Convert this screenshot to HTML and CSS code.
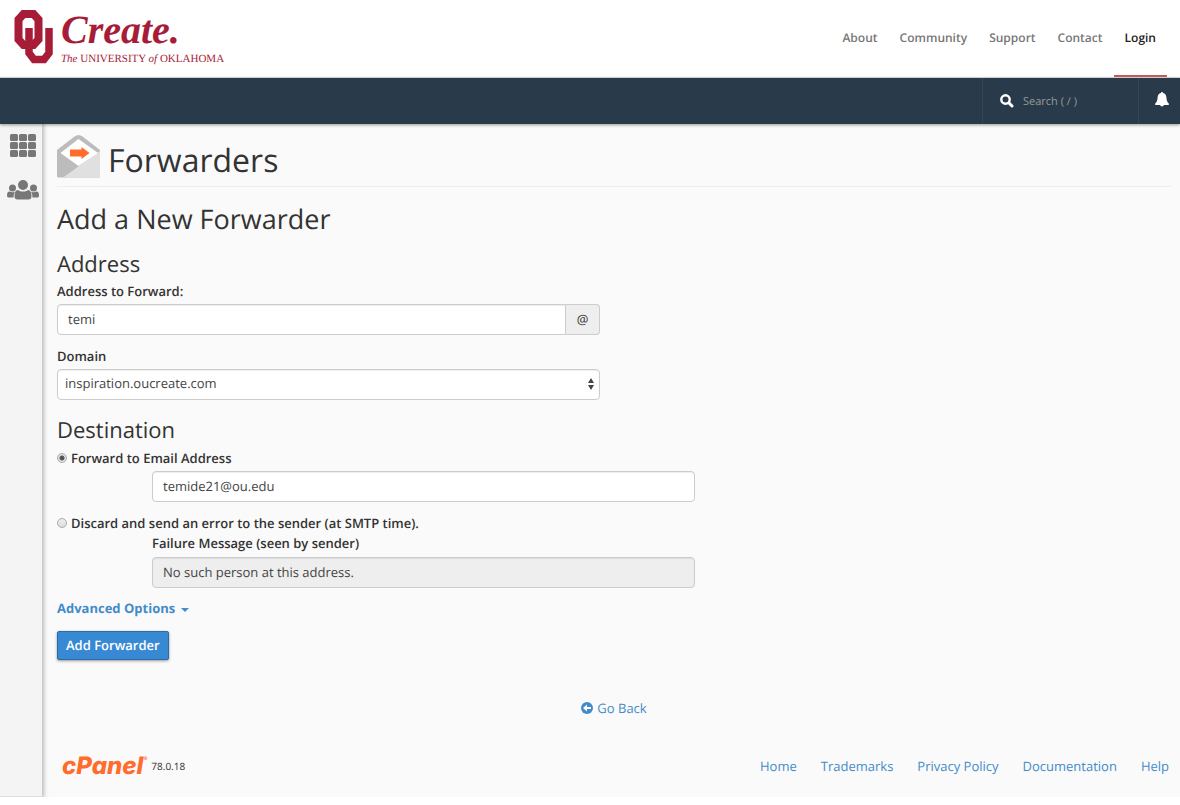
FILE: index.html
```html
<!DOCTYPE html>
<html lang="en">
<head>
  <meta charset="utf-8">
  <title>cPanel - Forwarders</title>
  <link rel="stylesheet" href="styles.css">
</head>

<body>
  <header class="site-header">
    <a href="#" class="logo">
      <svg class="logo-mark" width="40" height="54" viewBox="0 0 40 54" fill="none" stroke="#a71c37" stroke-width="8" aria-hidden="true">
        <path d="M9.500 4h10l5 5.500v20l-5 5.500h-10l-5-5.500v-20z" />
        <path d="M15 18v25l5 6.500h10l5-6.500v-25" stroke-width="7.500" />
      </svg>
      <span class="logo-text">
        <span class="logo-create">Create.</span>
        <span class="logo-sub"><i>The</i> UNIVERSITY <i>of</i> OKLAHOMA</span>
      </span>
    </a>
    <nav class="site-nav">
      <a href="#">About</a>
      <a href="#">Community</a>
      <a href="#">Support</a>
      <a href="#">Contact</a>
      <a href="#" class="active">Login</a>
    </nav>
  </header>

  <div class="top-bar">
    <div class="search">
      <svg width="14" height="14" viewBox="0 0 14 14" fill="none" stroke="#fff" aria-hidden="true">
        <circle cx="5.500" cy="5.500" r="4.200" stroke-width="2.400" />
        <path d="M9 9l3 3" stroke-width="3" stroke-linecap="round" />
      </svg>
      <input type="text" placeholder="Search ( / )" aria-label="Search">
    </div>
    <button type="button" class="bell-btn" aria-label="Notifications">
      <svg width="14" height="15" viewBox="0 0 14 15" fill="#fff" aria-hidden="true">
        <path d="M7 0c.7 0 1 .4 1 1 2.200.5 3.300 2.200 3.400 4.500.1 3 .9 4.600 2.400 6v1.400H.2v-1.400c1.500-1.400 2.300-3 2.400-6C2.700 3.200 3.800 1.500 6 1c0-.6.300-1 1-1zM5 12.500h4c-.2 1.300-1 2-2 2s-1.800-.7-2-2z" />
      </svg>
    </button>
  </div>

  <div class="page">
    <aside class="sidebar">
      <a href="#" aria-label="Home">
        <svg width="26" height="23" viewBox="0 0 26 23" fill="#777" aria-hidden="true">
          <rect x="0" y="0" width="8" height="7" rx="1.500" />
          <rect x="9" y="0" width="8" height="7" rx="1.500" />
          <rect x="18" y="0" width="8" height="7" rx="1.500" />
          <rect x="0" y="8" width="8" height="7" rx="1.500" />
          <rect x="9" y="8" width="8" height="7" rx="1.500" />
          <rect x="18" y="8" width="8" height="7" rx="1.500" />
          <rect x="0" y="16" width="8" height="7" rx="1.500" />
          <rect x="9" y="16" width="8" height="7" rx="1.500" />
          <rect x="18" y="16" width="8" height="7" rx="1.500" />
        </svg>
      </a>
      <a href="#" aria-label="User Manager">
        <svg width="32" height="20" viewBox="0 0 32 20" fill="#777" aria-hidden="true">
          <circle cx="16" cy="5" r="5" />
          <path d="M11 10c1.500 1.200 3 1.500 5 1.500s3.500-.3 5-1.500c2.500.3 3.500 2.500 3.500 6 0 2.500-1 3.500-3 3.500h-11c-2 0-3-1-3-3.500 0-3.500 1-5.700 3.500-6z" />
          <circle cx="5.500" cy="8" r="3.500" />
          <circle cx="26.500" cy="8" r="3.500" />
          <path d="M2.500 11.500c2 1 4.500 1 5.500.3-1 1.500-1.500 3.500-1.400 5.700H2c-1.400 0-2-.6-2-2 0-2.500.7-4 2.500-4zM29.500 11.500c-2 1-4.500 1-5.500.3 1 1.500 1.500 3.500 1.400 5.700H30c1.400 0 2-.6 2-2 0-2.500-.7-4-2.500-4z" />
        </svg>
      </a>
    </aside>

    <div class="main">
      <h1>
        <svg width="43" height="43" viewBox="0 0 43 43" aria-hidden="true">
          <path d="M0 15L17.500 1.500q4-3 8 0L43 15v26q0 1.500-1.500 1.500h-40Q0 42.500 0 41z" fill="#bcbcbc" />
          <path d="M43 16L6 42.500h35.500q1.500 0 1.500-1.500z" fill="#e0e0e0" />
          <path d="M21.500 4L41 18 21.500 31 3.500 18z" fill="#fff" />
          <path d="M13 14.500h11.500V12l8 6-8 6v-2.500H13z" fill="#ff6c2c" />
        </svg>
        Forwarders
      </h1>

      <h2>Add a New Forwarder</h2>

      <form>
        <h3>Address</h3>
        <div class="form-group">
          <label for="email">Address to Forward:</label>
          <div class="input-group">
            <input type="text" id="email" value="temi">
            <span class="addon">@</span>
          </div>
        </div>
        <div class="form-group">
          <label for="domain">Domain</label>
          <div class="select-wrap">
            <select id="domain">
              <option>inspiration.oucreate.com</option>
            </select>
            <svg class="select-arrows" width="6" height="12" viewBox="0 0 6 12" fill="#444" aria-hidden="true">
              <path d="M0 5l3-5 3 5zM0 7l3 5 3-5z" />
            </svg>
          </div>
        </div>

        <h3 class="destination">Destination</h3>
        <div class="radio-row">
          <input type="radio" name="fwdopt" id="fwd-radio" checked>
          <label for="fwd-radio">Forward to Email Address</label>
        </div>
        <div class="indent form-group">
          <input type="text" aria-label="Forward to Email Address" value="temide21@ou.edu">
        </div>
        <div class="radio-row">
          <input type="radio" name="fwdopt" id="fail-radio">
          <label for="fail-radio">Discard and send an error to the sender (at SMTP time).</label>
        </div>
        <div class="indent">
          <label for="failmsg">Failure Message (seen by sender)</label>
          <input type="text" id="failmsg" value="No such person at this address." disabled>
        </div>

        <a href="#" class="advanced">Advanced Options <span class="caret"></span></a>
        <button type="submit" class="submit-btn">Add Forwarder</button>
      </form>

      <a href="#" class="go-back">
        <svg width="12" height="12" viewBox="0 0 12 12" aria-hidden="true">
          <circle cx="6" cy="6" r="6" fill="#428bca" />
          <path d="M2 6l4-3.500V5h4v2H6v2.500z" fill="#fff" />
        </svg>
        Go Back
      </a>

      <footer class="footer">
        <div class="brand">
          <a href="#" class="cpanel">cPanel<sup>®</sup></a>
          <span class="version">78.0.18</span>
        </div>
        <nav class="footer-nav">
          <a href="#">Home</a>
          <a href="#">Trademarks</a>
          <a href="#">Privacy Policy</a>
          <a href="#">Documentation</a>
          <a href="#">Help</a>
        </nav>
      </footer>
    </div>
  </div>
</body>
</html>
```
FILE: styles.css
```css
* {
  box-sizing: border-box;
}

body {
  margin: 0;
  background-color: #fff;
  color: #333;
  font-family: "Open Sans", "Noto Sans", sans-serif;
  font-size: 13px;
  line-height: 20px;
  text-rendering: geometricPrecision;
}

input,
select,
button {
  text-rendering: inherit;
}

a {
  color: #428bca;
  text-decoration: none;
}

svg {
  flex-shrink: 0;
}

.site-header {
  display: flex;
  justify-content: space-between;
  height: 78px;
  padding: 0 13px 0 14px;
  border-bottom: 1px solid #ddd;
}

.logo {
  display: flex;
  gap: 7px;
  padding-top: 10px;
  color: #a71c37;
  font-family: "Liberation Serif", serif;
}

.logo-text {
  display: flex;
  flex-direction: column;
}

.logo-create {
  font-size: 40px;
  font-style: italic;
  font-weight: bold;
  line-height: 40px;
}

.logo-sub {
  font-size: 11px;
  line-height: 18px;
  white-space: nowrap;
}

.site-nav {
  display: flex;
}

.site-nav a {
  padding: 28px 11px 0;
  color: #777;
  font-size: 12px;
  font-weight: 600;
}

.site-nav .active {
  border-bottom: 2px solid #c55b5f;
  color: #222;
}

.top-bar {
  position: relative;
  display: flex;
  justify-content: flex-end;
  height: 46px;
  background-color: #293a4a;
  box-shadow: 0 1px 3px rgba(0, 0, 0, 0.4);
}

.search {
  display: flex;
  align-items: center;
  gap: 9px;
  width: 156px;
  padding-left: 17px;
  border-left: 1px solid #33475a;
}

.search input {
  width: 100px;
  padding: 0;
  border: none;
  background: none;
  color: #fff;
  font-family: inherit;
  font-size: 11px;
}

.search input::placeholder {
  color: #999;
}

.bell-btn {
  width: 42px;
  padding: 0 0 0 4px;
  border: none;
  border-left: 1px solid #33475a;
  background: none;
}

.page {
  display: flex;
  background-color: #fafafa;
}

.sidebar {
  display: flex;
  flex-direction: column;
  align-items: center;
  gap: 23px;
  width: 42px;
  padding: 10px 0 0 3px;
  border-bottom: 1px solid #ddd;
  background-color: #f4f4f4;
  box-shadow: 1px 0 4px 1px rgba(0, 0, 0, 0.25);
}

.sidebar svg {
  display: block;
}

.main {
  flex: 1;
  padding: 11px 9px 19px 15px;
}

h1,
h2,
h3 {
  margin: 0;
  font-weight: normal;
}

h1 {
  display: flex;
  gap: 8px;
  height: 52px;
  border-bottom: 1px solid #eee;
  font-size: 32px;
  line-height: 52px;
}

h2 {
  margin: 15px 0;
  font-size: 27px;
  line-height: 34px;
}

h3 {
  font-size: 22px;
  line-height: 26px;
}

label {
  display: block;
  font-weight: 600;
}

.form-group {
  margin-bottom: 11px;
}

.form-group label {
  margin: 4px 0 3px;
}

form input[type="text"],
select {
  display: block;
  width: 543px;
  height: 31px;
  padding: 0 10px 1px;
  border: 1px solid #ccc;
  border-radius: 4px;
  background-color: #fff;
  box-shadow: inset 0 1px 1px rgba(0, 0, 0, 0.075);
  color: #444;
  font-family: inherit;
  font-size: 13px;
}

form input[type="text"]:disabled {
  background-color: #eee;
}

.input-group {
  display: flex;
  width: 543px;
}

.input-group input[type="text"] {
  flex: 1;
  border-radius: 4px 0 0 4px;
}

.addon {
  width: 34px;
  border: 1px solid #ccc;
  border-left: none;
  border-radius: 0 4px 4px 0;
  background-color: #eee;
  line-height: 28px;
  text-align: center;
}

.select-wrap {
  position: relative;
  width: 543px;
}

select {
  padding: 0 7px 3px;
  appearance: none;
}

.select-arrows {
  position: absolute;
  top: 9px;
  right: 6px;
}

.destination {
  margin: 17px 0 5px;
}

.radio-row {
  display: flex;
  align-items: center;
  gap: 4px;
}

input[type="radio"] {
  width: 10px;
  height: 10px;
  margin: 0;
  border: 1px solid #aaa;
  border-radius: 50%;
  background: linear-gradient(#eee, #ddd);
  appearance: none;
}

input[type="radio"]:checked {
  background: radial-gradient(circle, #555 2px, #e4e4e4 3px);
}

.indent {
  margin-left: 95px;
}

.radio-row + .form-group {
  margin-top: 3px;
}

.indent label {
  margin-bottom: 4px;
}

.advanced {
  display: block;
  width: fit-content;
  margin: 10px 0 13px;
  font-weight: bold;
}

.caret {
  display: inline-block;
  margin-left: 2px;
  border-top: 4px solid #428bca;
  border-right: 4px solid transparent;
  border-left: 4px solid transparent;
  vertical-align: middle;
}

.submit-btn {
  display: block;
  height: 29px;
  padding: 0 8px 1px;
  border: 1px solid #2a6ca8;
  border-radius: 2px;
  background-color: #3889d3;
  box-shadow: 0 1px 3px rgba(0, 0, 0, 0.4);
  color: #fff;
  font-family: inherit;
  font-size: 13px;
  font-weight: 600;
}

.go-back {
  display: flex;
  align-items: center;
  justify-content: center;
  gap: 4px;
  margin-top: 38px;
}

.footer {
  display: flex;
  align-items: center;
  justify-content: space-between;
  margin-top: 36px;
  padding-right: 2px;
}

.brand {
  display: flex;
  align-items: center;
  gap: 4px;
  padding-left: 5px;
}

.cpanel {
  display: flex;
  color: #ff6c2c;
  font-family: Inter, sans-serif;
  font-size: 24px;
  font-style: italic;
  font-weight: 800;
  line-height: 24px;
}

.cpanel sup {
  font-size: 6px;
  line-height: 12px;
}

.version {
  font-size: 10px;
}

.footer-nav {
  display: flex;
  gap: 24px;
}
```
